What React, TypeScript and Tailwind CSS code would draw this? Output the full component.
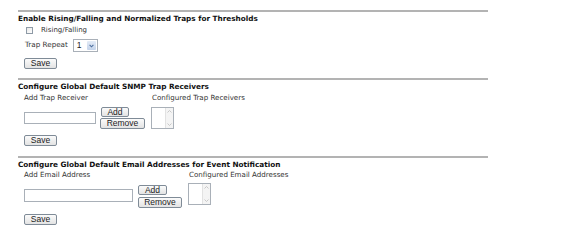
import React from "react"

const verdana = { fontFamily: '"DejaVu Sans", Verdana, sans-serif' }

function Btn({ label, className = "" }: { label: string; className?: string }) {
  return (
    <button
      className={
        "flex items-center justify-center rounded-[2px] border border-[#7f8b97] bg-gradient-to-b from-[#fbfbfb] to-[#e3e3e3] text-[8.5px] leading-none text-[#222] font-['Liberation_Sans',Arial,sans-serif] " +
        className
      }
    >
      {label}
    </button>
  )
}

function ListBox() {
  return (
    <div className="w-[23px] h-[22px] border border-[#a9b0b8] bg-white flex justify-end">
      <div className="w-[8px] flex flex-col items-center justify-between py-[2px] bg-[#f4f4f4] border-l border-[#e2e2e2]">
        <svg width="5" height="3" viewBox="0 0 5 3">
          <path d="M0.5 2.5 L2.5 0.5 L4.5 2.5" fill="none" stroke="#bcbcbc" strokeWidth="0.8" />
        </svg>
        <svg width="5" height="3" viewBox="0 0 5 3">
          <path d="M0.5 0.5 L2.5 2.5 L4.5 0.5" fill="none" stroke="#bcbcbc" strokeWidth="0.8" />
        </svg>
      </div>
    </div>
  )
}

function Divider() {
  return <div className="h-[2px] bg-[#b3b3b3]" />
}

function Heading({ children }: { children: React.ReactNode }) {
  return (
    <div className="mt-[2px] h-[10px] leading-[10px] text-[7.3px] font-bold text-[#111]" style={verdana}>
      {children}
    </div>
  )
}

export default function App() {
  return (
    <div className="min-h-[247px] w-[576px] bg-white">
      <div className="ml-[18px] pt-[10px] w-[470px] flex flex-col">
        <Divider />
        <Heading>Enable Rising/Falling and Normalized Traps for Thresholds</Heading>
        <div className="mt-[3px] h-[7px] pl-[8px] flex items-center gap-[8px] text-[7px] text-[#333]" style={verdana}>
          <div className="w-[7px] h-[7px] border border-[#8e9aa6] bg-gradient-to-br from-[#e8e8e8] to-white" />
          <span>Rising/Falling</span>
        </div>
        <div className="mt-[5px] h-[13px] pl-[7px] flex items-center gap-[5px] text-[7.2px] text-[#333]" style={verdana}>
          <span>Trap Repeat</span>
          <div className="w-[25px] h-[13px] border border-[#a9b0b8] bg-white flex items-center justify-between pl-[3px] pr-[1px]">
            <span className="text-[8.5px] font-['Liberation_Sans',Arial,sans-serif] text-[#222]">1</span>
            <div className="w-[9px] h-[9px] rounded-[1px] bg-gradient-to-b from-[#e4ecf7] to-[#c3d3ea] flex items-center justify-center">
              <svg width="5" height="4" viewBox="0 0 5 4">
                <path d="M0.6 0.8 L2.5 2.8 L4.4 0.8" fill="none" stroke="#4d6f9f" strokeWidth="1.1" />
              </svg>
            </div>
          </div>
        </div>
        <Btn label="Save" className="mt-[6px] ml-[6px] w-[33px] h-[11px]" />
        <div className="mt-[9px]">
          <Divider />
        </div>

        <Heading>Configure Global Default SNMP Trap Receivers</Heading>
        <div className="mt-[2px] h-[8px] flex items-center text-[7.1px] text-[#333]" style={verdana}>
          <span className="ml-[6px] w-[128px]">Add Trap Receiver</span>
          <span>Configured Trap Receivers</span>
        </div>
        <div className="mt-[5px] flex ml-[6px]">
          <div className="mt-[5px] w-[72px] h-[12px] border border-[#a9b0b8] bg-white" />
          <div className="ml-[4px] flex flex-col gap-[1px]">
            <Btn label="Add" className="ml-[1px] w-[28px] h-[10px]" />
            <Btn label="Remove" className="w-[45px] h-[11px]" />
          </div>
          <div className="ml-[6px]">
            <ListBox />
          </div>
        </div>
        <Btn label="Save" className="mt-[6px] ml-[6px] w-[33px] h-[11px]" />
        <div className="mt-[10px]">
          <Divider />
        </div>

        <Heading>Configure Global Default Email Addresses for Event Notification</Heading>
        <div className="mt-[1px] h-[8px] flex items-center text-[7.1px] text-[#333]" style={verdana}>
          <span className="ml-[6px] w-[165px]">Add Email Address</span>
          <span>Configured Email Addresses</span>
        </div>
        <div className="mt-[4px] flex ml-[6px]">
          <div className="mt-[6px] w-[109px] h-[13px] border border-[#a9b0b8] bg-white" />
          <div className="ml-[5px] mt-[2px] flex flex-col gap-[2px]">
            <Btn label="Add" className="w-[29px] h-[10px]" />
            <Btn label="Remove" className="w-[44px] h-[11px]" />
          </div>
          <div className="ml-[6px]">
            <ListBox />
          </div>
        </div>
        <Btn label="Save" className="mt-[6px] ml-[6px] w-[33px] h-[11px]" />
      </div>
    </div>
  )
}
